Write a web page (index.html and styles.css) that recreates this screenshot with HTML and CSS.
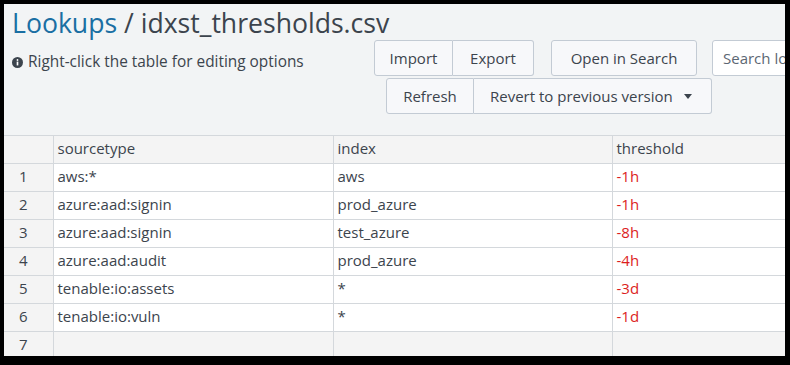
FILE: index.html
```html
<!DOCTYPE html>
<html lang="en">
	<head>
		<meta charset="utf-8">
		<title>Lookups / idxst_thresholds.csv</title>
		<link rel="stylesheet" href="styles.css">
	</head>
	<body>
		<div class="frame">
			<div class="page">
				<div class="header">
					<h1 class="title"><a href="#">Lookups</a> / idxst_thresholds.csv</h1>
					<div class="bar">
						<div class="info">
							<svg class="info-icon" viewBox="0 0 12 12" width="11" height="11">
								<circle cx="6" cy="6" r="6" fill="#3c444d"/>
								<rect x="5.1" y="5" width="1.8" height="4.2" fill="#fff"/>
								<circle cx="6" cy="3.3" r="1" fill="#fff"/>
							</svg>
							Right-click the table for editing options
						</div>
						<div class="toolbar">
							<div class="tool-row">
								<div class="group">
									<button class="btn btn-import">Import</button>
									<button class="btn btn-export">Export</button>
								</div>
								<button class="btn btn-open">Open in Search</button>
								<input class="search" type="text" placeholder="Search lookup">
							</div>
							<div class="tool-row second">
								<div class="group">
									<button class="btn btn-refresh">Refresh</button>
									<button class="btn btn-revert">Revert to previous version <span class="caret"></span></button>
								</div>
							</div>
						</div>
					</div>
				</div>
				<table class="grid">
					<colgroup>
						<col class="c-num">
						<col class="c-src">
						<col class="c-idx">
						<col class="c-thr">
					</colgroup>
					<thead>
						<tr>
							<th></th>
							<th>sourcetype</th>
							<th>index</th>
							<th>threshold</th>
						</tr>
					</thead>
					<tbody>
						<tr><td class="num">1</td><td>aws:*</td><td>aws</td><td class="thr">-1h</td></tr>
						<tr><td class="num">2</td><td>azure:aad:signin</td><td>prod_azure</td><td class="thr">-1h</td></tr>
						<tr><td class="num">3</td><td>azure:aad:signin</td><td>test_azure</td><td class="thr">-8h</td></tr>
						<tr><td class="num">4</td><td>azure:aad:audit</td><td>prod_azure</td><td class="thr">-4h</td></tr>
						<tr><td class="num">5</td><td>tenable:io:assets</td><td>*</td><td class="thr">-3d</td></tr>
						<tr><td class="num">6</td><td>tenable:io:vuln</td><td>*</td><td class="thr">-1d</td></tr>
						<tr class="new-row"><td class="num">7</td><td></td><td></td><td></td></tr>
					</tbody>
				</table>
			</div>
		</div>
	</body>
</html>
```

FILE: styles.css
```css
html, body {
	margin: 0;
	padding: 0;
	background: #000;
}

body {
	font-family: "Open Sans", "Liberation Sans", sans-serif;
	color: #3c444d;
	width: 790px;
	height: 365px;
	overflow: hidden;
}

.frame {
	box-sizing: border-box;
	width: 790px;
	height: 365px;
	border-style: solid;
	border-color: #000;
	border-width: 4px 5px 9px 4px;
	overflow: hidden;
}

.page {
	background: #f2f4f5;
	height: 100%;
	overflow: hidden;
}

.header {
	height: 131px;
	padding-left: 8px;
	box-sizing: border-box;
}

.title {
	margin: 0;
	padding-top: 2px;
	font-size: 26.6px;
	font-weight: normal;
	line-height: 34px;
	color: #3c444d;
	white-space: nowrap;
}

.title a {
	color: #1a6fa3;
	text-decoration: none;
}

.bar {
	display: flex;
	align-items: flex-start;
}

.info {
	width: 362px;
	flex: none;
	font-size: 15.4px;
	line-height: 20px;
	margin-top: 12px;
	white-space: nowrap;
}

.info-icon {
	vertical-align: -1px;
	margin-right: 1px;
}

.toolbar {
	flex: none;
}

.tool-row {
	display: flex;
	gap: 17px;
	white-space: nowrap;
}

.tool-row.second {
	margin-top: 2px;
	margin-left: 12px;
}

.group {
	display: flex;
}

.btn {
	box-sizing: border-box;
	height: 36px;
	padding: 0 14px;
	font-family: inherit;
	font-size: 15px;
	color: #3c444d;
	background: #f7f8fa;
	border: 1px solid #c3cbd4;
	border-radius: 3px;
}

.group .btn:first-child {
	border-top-right-radius: 0;
	border-bottom-right-radius: 0;
}

.group .btn + .btn {
	border-left: none;
	border-top-left-radius: 0;
	border-bottom-left-radius: 0;
}

.btn-import { width: 79px; }
.btn-export { width: 81px; }
.btn-open { width: 146px; }
.btn-refresh { width: 88px; }
.btn-revert { width: 238px; text-align: left; padding-left: 16px; }

.caret {
	display: inline-block;
	margin-left: 7px;
	border-left: 4px solid transparent;
	border-right: 4px solid transparent;
	border-top: 5px solid #3c444d;
	vertical-align: 3px;
}

.search {
	box-sizing: border-box;
	margin-left: -2px;
	width: 160px;
	height: 36px;
	padding: 0 10px;
	font-family: inherit;
	font-size: 15px;
	background: #fff;
	border: 1px solid #c3cbd4;
	border-radius: 3px;
}

.search::placeholder {
	color: #5c6773;
}

.grid {
	border-collapse: collapse;
	table-layout: fixed;
	width: 889px;
	font-size: 15px;
	color: #3c444d;
}

.c-num { width: 49px; }
.c-src { width: 280px; }
.c-idx { width: 279px; }
.c-thr { width: 281px; }

.grid th,
.grid td {
	box-sizing: border-box;
	height: 28px;
	padding: 0 4px 3px;
	border: 1px solid #d4d8dc;
	text-align: left;
	font-weight: normal;
	white-space: nowrap;
	overflow: hidden;
	background: #fff;
	line-height: 22px;
}

.grid th {
	background: #f4f4f4;
}

.grid th:first-child,
.grid td:first-child {
	border-left: none;
}

.grid td.num {
	background: #f4f4f4;
	padding-left: 15px;
}

.grid td.thr {
	color: #dc1e1e;
}

.grid .new-row td {
	background: #f4f4f4;
}
```
